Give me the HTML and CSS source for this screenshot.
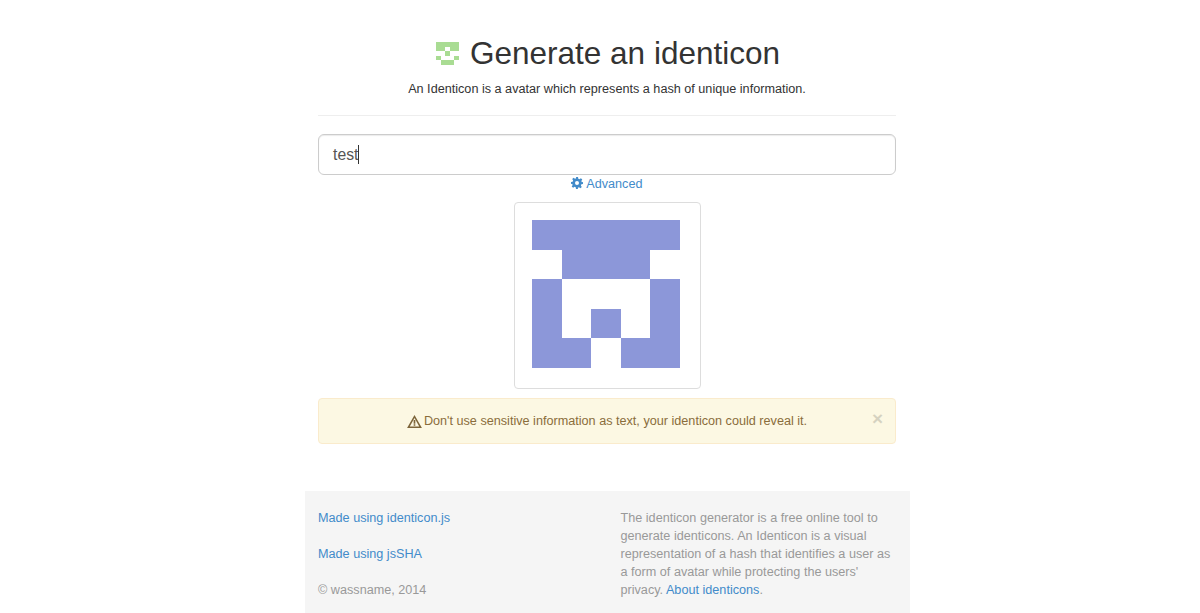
FILE: index.html
```html
<!DOCTYPE html>
<html lang="en">
<head>
<meta charset="utf-8">
<title>Generate an identicon</title>
<link rel="stylesheet" href="styles.css">
</head>
<body>
<div class="page">
  <main class="content">
    <header class="header">
      <h1 class="title">
        <svg class="logo" viewBox="0 0 5 5" shape-rendering="crispEdges" aria-hidden="true">
          <path fill="#a9dc93" d="M0 0h5v1H0zM0 1h2v1H0zM3 1h2v1H3zM2 2h1v1H2zM0 3h1v1H0zM4 3h1v1H4zM1 4h3v1H1z"/>
        </svg>
        Generate an identicon
      </h1>
      <p class="lead">An Identicon is a avatar which represents a hash of unique information.</p>
    </header>
    <div class="field"><span class="typed">test</span><span class="caret"></span></div>
    <div class="advanced">
      <a href="#" class="link">
        <svg class="gear" viewBox="0 0 24 24" aria-hidden="true">
          <path fill-rule="evenodd" d="M10 0h4l.6 3.3 2.4 1 2.8-1.9 2.8 2.8-1.9 2.8 1 2.4L24 10v4l-3.3.6-1 2.4 1.9 2.8-2.8 2.8-2.8-1.9-2.4 1L14 24h-4l-.6-3.3-2.4-1-2.8 1.9-2.8-2.8 1.9-2.8-1-2.4L0 14v-4l3.3-.6 1-2.4-1.9-2.8 2.8-2.8 2.8 1.9 2.4-1zM12 8a4 4 0 1 0 0 8 4 4 0 0 0 0-8z"/>
        </svg>
        Advanced
      </a>
    </div>
    <div class="thumb">
      <svg class="identicon" viewBox="0 0 5 5" shape-rendering="crispEdges" role="img" aria-label="Identicon">
        <path fill="#8c97d9" d="M0 0h5v1H0zM1 1h3v1H1zM0 2h1v3H0zM4 2h1v3H4zM2 3h1v1H2zM1 4h1v1H1zM3 4h1v1H3z"/>
      </svg>
    </div>
    <div class="alert">
      <svg class="warn" viewBox="0 0 16 14" aria-hidden="true">
        <path fill-rule="evenodd" d="M8 0l8 14H0zM8 3.2L2.9 12.4h10.2zM7.1 5.5h1.8v3.8H7.1zM7.1 9.9h1.8v1.6H7.1z"/>
      </svg>
      <span>Don't use sensitive information as text, your identicon could reveal it.</span>
      <span class="close">×</span>
    </div>
  </main>
  <footer class="footer">
    <div class="col">
      <p class="item"><a href="#" class="link">Made using identicon.js</a></p>
      <p class="item"><a href="#" class="link">Made using jsSHA</a></p>
      <p class="item">© wassname, 2014</p>
    </div>
    <div class="col">
      <p class="item">The identicon generator is a free online tool to generate identicons. An Identicon is a visual representation of a hash that identifies a user as a form of avatar while protecting the users' privacy. <a href="#" class="link">About identicons</a>.</p>
    </div>
  </footer>
</div>
</body>
</html>
```

FILE: styles.css
```css
* { box-sizing: border-box; }
html, body { margin: 0; padding: 0; height: 100%; overflow: hidden; background: #fff; }
body { font-family: "Liberation Sans", Arial, sans-serif; font-size: 12.65px; line-height: 18px; color: #333; }
.page { width: 605px; margin-left: 305px; }
.content { padding: 0 14px 0 13px; }
.header { padding-top: 32px; padding-bottom: 17px; border-bottom: 1px solid #eee; text-align: center; }
.title { margin: 0; padding-left: 2px; font-size: 31.5px; font-weight: 400; line-height: 42px; display: flex; justify-content: center; align-items: center; gap: 11px; }
.logo { width: 23px; height: 23px; }
.lead { margin: 6px 0 0; }
.field { margin-top: 18px; height: 41px; padding: 0 14px; border: 1px solid #ccc; border-radius: 6px; box-shadow: inset 0 1px 1px rgba(0,0,0,.08); font-size: 15.75px; color: #555; display: flex; align-items: center; }
.caret { width: 1px; height: 19px; background: #333; }
.advanced { text-align: center; }
.link { color: #428bca; text-decoration: none; }
.gear { width: 12px; height: 12px; fill: #428bca; vertical-align: -1px; }
.thumb { width: 187px; height: 187px; margin: 9px auto 0; padding: 17px; border: 1px solid #ddd; border-radius: 4px; }
.identicon { display: block; width: 148px; height: 148px; }
.alert { position: relative; margin-top: 9px; height: 46px; border: 1px solid #faebcc; border-radius: 4px; background: #fcf8e3; color: #8a6d3b; display: flex; align-items: center; justify-content: center; gap: 2px; }
.warn { width: 15px; height: 13px; fill: #7d653a; }
.close { position: absolute; right: 12px; top: 10px; font-size: 19px; font-weight: 700; color: #000; opacity: .15; line-height: 20px; }
.footer { margin-top: 47px; height: 124px; padding: 18px 0; background: #f5f5f5; color: #999; display: grid; grid-template-columns: 1fr 1fr; }
.col { padding: 0 13px; }
.item { margin: 0 0 18px; }
```
